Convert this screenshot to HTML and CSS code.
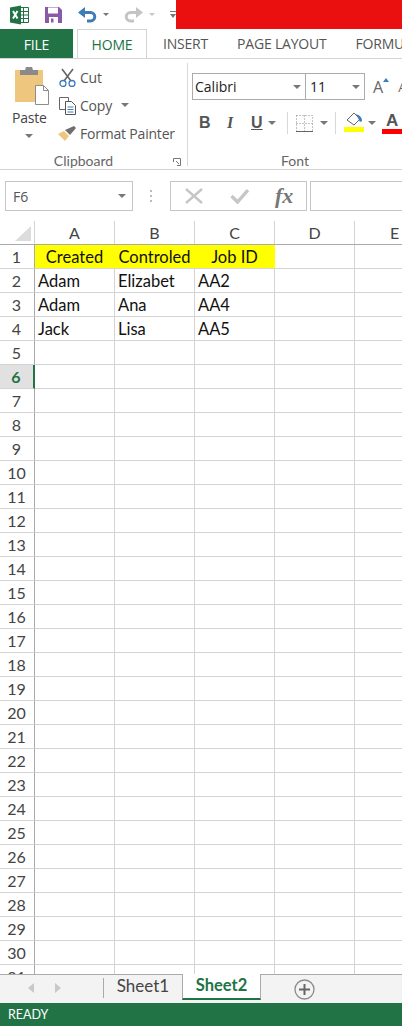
FILE: index.html
```html
<!DOCTYPE html>
<html lang="en">
<head>
<meta charset="utf-8">
<title>Excel</title>
<link rel="stylesheet" href="styles.css">
</head>
<body>
<div class="app">
  <div class="titlebar">
    <svg class="qa-logo" width="22" height="22" viewBox="0 0 22 22"><path fill="#fff" stroke="#217346" d="M9.500 3.500h10v15h-10z"/><path stroke="#217346" fill="none" d="M14.500 3.500v15M9.500 7.500h10M9.500 11h10M9.500 14.500h10"/><path fill="#217346" d="M1 3.500 12 1.500v19L1 18.500z"/><path stroke="#fff" stroke-width="2" fill="none" d="M4 7l4.500 7.500M8.500 7 4 14.500"/></svg>
    <svg class="qa-save" width="17" height="17" viewBox="0 0 17 17"><path fill="#8a5aa8" d="M0 1h14l3 3v13H0z"/><path fill="#fff" d="M3 1.500h10v6H3z"/><path fill="#fff" d="M4 11h9v6H4z"/><path fill="#8a5aa8" d="M6 12.500h2.500v4H6z"/></svg>
    <svg class="qa-undo" width="19" height="17" viewBox="0 0 19 17"><path fill="none" stroke="#3e7cb8" stroke-width="3" d="M4 6.500h8.500a4 4 0 0 1 0 8.500H9"/><path fill="#3e7cb8" d="M0 6.500 7 1v11z"/></svg>
    <span class="caret caret-dark qa-caret qa-c1"></span>
    <svg class="qa-redo" width="19" height="17" viewBox="0 0 19 17"><path fill="none" stroke="#c4c4c4" stroke-width="3" d="M15 6.500H6.500a4 4 0 0 0 0 8.500H10"/><path fill="#c4c4c4" d="M19 6.500 12 1v11z"/></svg>
    <span class="caret caret-light qa-caret qa-c2"></span>
    <svg class="qa-more" width="6" height="8" viewBox="0 0 6 8"><path fill="#777" d="M0 0h6v1H0zM0 3h6L3 7z"/></svg>
    <div class="redbar"></div>
  </div>

  <div class="tabs">
    <div class="tab-file">FILE</div>
    <div class="tab-home">HOME</div>
    <div class="tab">INSERT</div>
    <div class="tab tab-wide">PAGE LAYOUT</div>
    <div class="tab tab-last">FORMULAS</div>
  </div>

  <div class="ribbon">
    <section class="group group-clip">
      <div class="group-body">
        <div class="paste">
          <svg width="35" height="39" viewBox="0 0 35 39"><path fill="#eec67d" d="M0 3h28v32H0z"/><path fill="#8a8a8a" d="M5 3h5l1-3h6l1 3h5v5H5z"/><path fill="#fff" stroke="#8c8c8c" d="M20.500 18.500h8l5 5v14h-13z"/><path fill="none" stroke="#8c8c8c" d="M28.500 18.500v5h5"/></svg>
          <span class="paste-label">Paste</span>
          <span class="caret caret-dark"></span>
        </div>
        <div class="clip-list">
          <div class="clip-row">
            <svg width="17" height="19" viewBox="0 0 17 19"><path stroke="#666" stroke-width="1.600" fill="none" d="M3 1l9 12M14 1 5 13"/><circle cx="4" cy="15.500" r="3" fill="none" stroke="#3e7cb8" stroke-width="1.300"/><circle cx="13" cy="15.500" r="3" fill="none" stroke="#3e7cb8" stroke-width="1.300"/></svg>
            <span>Cut</span>
          </div>
          <div class="clip-row">
            <svg width="17" height="19" viewBox="0 0 17 19"><path fill="#fff" stroke="#666" d="M.5 1.500h9v12h-9z"/><path fill="#fff" stroke="#555" d="M6.500 5.500h6l4 4v9h-10z"/><path stroke="#3e7cb8" d="M8.500 11h6M8.500 13.500h6M8.500 16h6"/></svg>
            <span>Copy</span>
            <span class="caret caret-dark copy-caret"></span>
          </div>
          <div class="clip-row">
            <svg width="19" height="15" viewBox="0 0 19 15"><path fill="#eec67d" d="M0 8l6-3 5 5-4 5z"/><path fill="#6e6e6e" d="M7 4l5 5 6-7-2-2z"/></svg>
            <span>Format Painter</span>
          </div>
        </div>
      </div>
      <div class="group-label group-label-clip">
        <span>Clipboard</span>
        <svg class="launcher" width="8" height="8" viewBox="0 0 8 8"><path fill="none" stroke="#777" d="M.5 4V.5H7.500V7.500H4"/><path stroke="#777" d="M3 3l3 3"/></svg>
      </div>
    </section>

    <section class="group group-font">
      <div class="group-body group-body-font">
        <div class="font-row">
          <div class="combo combo-name"><span>Calibri</span><span class="caret caret-dark"></span></div>
          <div class="combo combo-size"><span>11</span><span class="caret caret-dark"></span></div>
          <div class="grow-a">A<svg width="6" height="4" viewBox="0 0 6 4"><path fill="#3e7cb8" d="M0 4l3-4 3 4z"/></svg></div>
          <div class="shrink-a">A</div>
        </div>
        <div class="format-row">
          <span class="fmt fmt-b">B</span>
          <span class="fmt fmt-i">I</span>
          <span class="fmt fmt-u">U</span>
          <span class="caret caret-dark u-caret"></span>
          <span class="sep"></span>
          <svg class="borders" width="17" height="17" viewBox="0 0 17 17"><path fill="none" stroke="#888" stroke-dasharray="1 2" d="M.5.500h16v16H.500zM8.500.500v16M.500 8.500h16"/><path stroke="#666" d="M0 16.500h17"/></svg>
          <span class="caret caret-dark border-caret"></span>
          <span class="sep"></span>
          <div class="fill-icon">
            <svg width="20" height="15" viewBox="0 0 20 15"><path fill="#fff" stroke="#666" d="M3 8l7-7 6 6-6 6z"/><path fill="#3e7cb8" d="M12 2c3 1 6 3 6 7l-2 1z"/></svg>
            <span class="swatch swatch-yellow"></span>
          </div>
          <span class="caret caret-dark"></span>
          <div class="color-a"><span>A</span><span class="swatch swatch-red"></span></div>
        </div>
      </div>
      <div class="group-label">Font</div>
    </section>
  </div>

  <div class="formula">
    <div class="namebox"><span>F6</span><span class="caret caret-dark"></span></div>
    <div class="dots"><i></i><i></i><i></i></div>
    <div class="fx-box">
      <svg class="fx-x" width="18" height="16" viewBox="0 0 18 16"><path stroke="#c6c6c6" stroke-width="2.400" d="M1 1l16 14M17 1 1 15"/></svg>
      <svg class="fx-check" width="19" height="16" viewBox="0 0 19 16"><path fill="none" stroke="#c6c6c6" stroke-width="3.400" d="M1.500 8l6 6L18 2"/></svg>
      <span class="fx">fx</span>
    </div>
    <div class="formula-input"></div>
  </div>

  <div class="sheet">
    <div class="row row-head">
      <div class="corner"><span></span></div>
      <div class="col">A</div><div class="col">B</div><div class="col">C</div><div class="col">D</div><div class="col">E</div>
    </div>
    <div class="row"><div class="num">1</div><div class="cell hl ctr">Created</div><div class="cell hl ctr">Controled</div><div class="cell hl ctr">Job ID</div><div class="cell"></div><div class="cell"></div></div>
    <div class="row"><div class="num">2</div><div class="cell">Adam</div><div class="cell">Elizabet</div><div class="cell">AA2</div><div class="cell"></div><div class="cell"></div></div>
    <div class="row"><div class="num">3</div><div class="cell">Adam</div><div class="cell">Ana</div><div class="cell">AA4</div><div class="cell"></div><div class="cell"></div></div>
    <div class="row"><div class="num">4</div><div class="cell">Jack</div><div class="cell">Lisa</div><div class="cell">AA5</div><div class="cell"></div><div class="cell"></div></div>
    <div class="row"><div class="num">5</div><div class="cell"></div><div class="cell"></div><div class="cell"></div><div class="cell"></div><div class="cell"></div></div>
    <div class="row"><div class="num num-active">6</div><div class="cell"></div><div class="cell"></div><div class="cell"></div><div class="cell"></div><div class="cell"></div></div>
    <div class="row"><div class="num">7</div><div class="cell"></div><div class="cell"></div><div class="cell"></div><div class="cell"></div><div class="cell"></div></div>
    <div class="row"><div class="num">8</div><div class="cell"></div><div class="cell"></div><div class="cell"></div><div class="cell"></div><div class="cell"></div></div>
    <div class="row"><div class="num">9</div><div class="cell"></div><div class="cell"></div><div class="cell"></div><div class="cell"></div><div class="cell"></div></div>
    <div class="row"><div class="num">10</div><div class="cell"></div><div class="cell"></div><div class="cell"></div><div class="cell"></div><div class="cell"></div></div>
    <div class="row"><div class="num">11</div><div class="cell"></div><div class="cell"></div><div class="cell"></div><div class="cell"></div><div class="cell"></div></div>
    <div class="row"><div class="num">12</div><div class="cell"></div><div class="cell"></div><div class="cell"></div><div class="cell"></div><div class="cell"></div></div>
    <div class="row"><div class="num">13</div><div class="cell"></div><div class="cell"></div><div class="cell"></div><div class="cell"></div><div class="cell"></div></div>
    <div class="row"><div class="num">14</div><div class="cell"></div><div class="cell"></div><div class="cell"></div><div class="cell"></div><div class="cell"></div></div>
    <div class="row"><div class="num">15</div><div class="cell"></div><div class="cell"></div><div class="cell"></div><div class="cell"></div><div class="cell"></div></div>
    <div class="row"><div class="num">16</div><div class="cell"></div><div class="cell"></div><div class="cell"></div><div class="cell"></div><div class="cell"></div></div>
    <div class="row"><div class="num">17</div><div class="cell"></div><div class="cell"></div><div class="cell"></div><div class="cell"></div><div class="cell"></div></div>
    <div class="row"><div class="num">18</div><div class="cell"></div><div class="cell"></div><div class="cell"></div><div class="cell"></div><div class="cell"></div></div>
    <div class="row"><div class="num">19</div><div class="cell"></div><div class="cell"></div><div class="cell"></div><div class="cell"></div><div class="cell"></div></div>
    <div class="row"><div class="num">20</div><div class="cell"></div><div class="cell"></div><div class="cell"></div><div class="cell"></div><div class="cell"></div></div>
    <div class="row"><div class="num">21</div><div class="cell"></div><div class="cell"></div><div class="cell"></div><div class="cell"></div><div class="cell"></div></div>
    <div class="row"><div class="num">22</div><div class="cell"></div><div class="cell"></div><div class="cell"></div><div class="cell"></div><div class="cell"></div></div>
    <div class="row"><div class="num">23</div><div class="cell"></div><div class="cell"></div><div class="cell"></div><div class="cell"></div><div class="cell"></div></div>
    <div class="row"><div class="num">24</div><div class="cell"></div><div class="cell"></div><div class="cell"></div><div class="cell"></div><div class="cell"></div></div>
    <div class="row"><div class="num">25</div><div class="cell"></div><div class="cell"></div><div class="cell"></div><div class="cell"></div><div class="cell"></div></div>
    <div class="row"><div class="num">26</div><div class="cell"></div><div class="cell"></div><div class="cell"></div><div class="cell"></div><div class="cell"></div></div>
    <div class="row"><div class="num">27</div><div class="cell"></div><div class="cell"></div><div class="cell"></div><div class="cell"></div><div class="cell"></div></div>
    <div class="row"><div class="num">28</div><div class="cell"></div><div class="cell"></div><div class="cell"></div><div class="cell"></div><div class="cell"></div></div>
    <div class="row"><div class="num">29</div><div class="cell"></div><div class="cell"></div><div class="cell"></div><div class="cell"></div><div class="cell"></div></div>
    <div class="row"><div class="num">30</div><div class="cell"></div><div class="cell"></div><div class="cell"></div><div class="cell"></div><div class="cell"></div></div>
    <div class="row"><div class="num">31</div><div class="cell"></div><div class="cell"></div><div class="cell"></div><div class="cell"></div><div class="cell"></div></div>
  </div>

  <div class="sheet-tabs">
    <div class="nav">
      <svg width="6" height="10" viewBox="0 0 6 10"><path fill="#c8c8c8" d="M6 0v10L0 5z"/></svg>
      <svg width="6" height="10" viewBox="0 0 6 10"><path fill="#c8c8c8" d="M0 0v10l6-5z"/></svg>
    </div>
    <div class="sheet-tab">Sheet1</div>
    <div class="sheet-tab-active">Sheet2</div>
    <svg class="add" width="21" height="21" viewBox="0 0 21 21"><circle cx="10.500" cy="10.500" r="9.500" fill="none" stroke="#8c8c8c" stroke-width="1.300"/><path stroke="#666" stroke-width="2" d="M10.500 5v11M5 10.500h11"/></svg>
  </div>

  <div class="status">READY</div>
</div>
</body>
</html>
```

FILE: styles.css
```css
* { box-sizing: border-box; }
html, body { margin: 0; padding: 0; }
body { background: #fff; font-family: "Open Sans", "Liberation Sans", sans-serif; color: #444; overflow: hidden; }
.app { width: 402px; height: 1026px; display: flex; flex-direction: column; overflow: hidden; }

.caret { display: inline-block; width: 0; height: 0; border-left: 4px solid transparent; border-right: 4px solid transparent; flex: none; }
.caret-dark { border-top: 4px solid #777; }
.caret-light { border-top: 4px solid #c8c8c8; }
.qa-caret { border-left-width: 3px; border-right-width: 3px; border-top-width: 3px; }

.titlebar { height: 29px; display: flex; align-items: center; flex: none; }
.qa-logo { margin-left: 9px; flex: none; }
.qa-save { margin-left: 14px; flex: none; }
.qa-undo { margin-left: 16px; flex: none; }
.qa-c1 { margin-left: 6px; }
.qa-redo { margin-left: 15px; flex: none; }
.qa-c2 { margin-left: 6px; }
.qa-more { margin-left: 15px; flex: none; }
.redbar { height: 29px; background: #ea1010; width: 226px; margin-left: auto; flex: none; }

.tabs { height: 30px; display: flex; flex: none; border-bottom: 1px solid #d4d4d4; font-size: 14px; white-space: nowrap; overflow: hidden; letter-spacing: -.2px; }
.tab-file { flex: none; width: 73px; height: 30px; background: #217346; color: #fff; display: flex; align-items: center; justify-content: center; }
.tab-home { flex: none; width: 70px; margin-left: 4px; height: 30px; border: 1px solid #d4d4d4; border-bottom: 1px solid #fff; color: #217346; display: flex; align-items: center; justify-content: center; background: #fff; }
.tab { flex: none; color: #555; display: flex; align-items: center; margin-left: 16px; }
.tab-wide { margin-left: 29px; }
.tab-last { margin-left: 29px; }

.ribbon { height: 111px; display: flex; flex: none; border-bottom: 1px solid #d4d4d4; padding-top: 4px; }
.group { display: flex; flex-direction: column; height: 103px; }
.group-clip { width: 188px; flex: none; border-right: 1px solid #d8d8d8; }
.group-font { flex: 1; min-width: 0; }
.group-body { flex: 1; display: flex; min-height: 0; }
.group-label { height: 18px; margin-bottom: -3px; flex: none; font-size: 14px; color: #666; display: flex; align-items: center; justify-content: center; position: relative; font-family: Lato, sans-serif; }
.group-label-clip { padding-right: 20px; }
.launcher { position: absolute; right: 6px; top: 7px; }

.paste { width: 58px; flex: none; padding-left: 15px; display: flex; flex-direction: column; align-items: flex-start; padding-top: 4px; }
.paste svg { flex: none; }
.paste-label { font-size: 14px; margin-left: -3px; margin-top: 3px; line-height: 18px; letter-spacing: -.2px; }
.paste .caret { margin: 7px 0 0 10px; }
.clip-list { display: flex; flex-direction: column; flex: none; }
.clip-row { height: 28px; flex: none; display: flex; align-items: center; gap: 3px; font-size: 14px; white-space: nowrap; letter-spacing: -.2px; color: #555; }
.clip-row svg { flex: none; width: 19px; }
.copy-caret { margin-left: 6px; }

.group-body-font { flex-direction: column; padding-left: 4px; overflow: hidden; }
.font-row { display: flex; align-items: center; height: 27px; margin-top: 10px; flex: none; }
.combo { height: 27px; flex: none; border: 1px solid #ababab; display: flex; align-items: center; justify-content: space-between; font-size: 14px; color: #222; padding: 0 4px 0 2px; }
.combo-name { width: 114px; }
.combo-size { width: 59px; border-left: 0; padding-left: 4px; }
.grow-a { margin-left: 8px; flex: none; font-size: 16px; color: #666; display: flex; align-items: flex-start; }
.grow-a svg { margin-top: 2px; }
.shrink-a { margin-left: 9px; flex: none; font-size: 13px; color: #666; }
.format-row { display: flex; align-items: center; height: 24px; margin-top: 11px; flex: none; white-space: nowrap; padding-left: 7px; }
.fmt { font-family: "Liberation Sans", sans-serif; font-size: 16px; color: #555; font-weight: 700; flex: none; }
.fmt-b { width: 28px; }
.fmt-i { width: 24px; font-family: "Liberation Serif", serif; font-style: italic; }
.fmt-u { width: 17px; text-decoration: underline; }
.u-caret { margin-right: 4px; }
.sep { width: 1px; height: 22px; background: #d8d8d8; margin: 0 8px 0 7px; flex: none; }
.borders { flex: none; }
.border-caret { margin-left: 7px; }
.fill-icon { display: flex; flex-direction: column; width: 20px; flex: none; margin-top: -3px; margin-right: 4px; }
.swatch { display: block; height: 5px; width: 20px; }
.swatch-yellow { background: #ffff00; }
.swatch-red { background: #ff0000; }
.color-a { display: flex; flex-direction: column; width: 20px; margin-left: 6px; flex: none; font-size: 17px; font-weight: 700; line-height: 16px; color: #555; font-family: "Liberation Sans", sans-serif; }
.color-a span:first-child { margin-left: 4px; }

.formula { height: 30px; margin-top: 11px; display: flex; align-items: stretch; flex: none; padding-left: 5px; }
.namebox { width: 128px; flex: none; border: 1px solid #c6c6c6; display: flex; align-items: center; justify-content: space-between; padding: 0 6px 0 7px; font-size: 14px; color: #555; }
.dots { width: 37px; flex: none; display: flex; flex-direction: column; justify-content: center; align-items: center; gap: 3px; padding-right: 2px; }
.dots i { width: 2px; height: 2px; background: #bbb; display: block; }
.fx-box { width: 137px; flex: none; border: 1px solid #c6c6c6; display: flex; align-items: center; padding-left: 14px; }
.fx-check { margin-left: 27px; flex: none; }
.fx-x { flex: none; }
.fx { font-family: "Liberation Serif", serif; font-style: italic; font-weight: 700; font-size: 22px; line-height: 24px; color: #777; margin-left: 26px; }
.formula-input { flex: 1; margin-left: 3px; border: 1px solid #c6c6c6; border-right: 0; }

.sheet { flex: 1; margin-top: 10px; min-height: 0; overflow: hidden; font-family: Lato, sans-serif; }
.row { display: grid; grid-template-columns: 35px 80px 80px 80px 80px 80px; height: 24px; width: 435px; }
.row-head { height: 24px; border-bottom: 1px solid #aaa; }
.corner { border-right: 1px solid #d4d4d4; display: flex; justify-content: flex-end; align-items: flex-end; padding: 0 3px 3px 0; }
.corner span { width: 0; height: 0; border-left: 16px solid transparent; border-bottom: 15px solid #dcdcdc; }
.col { text-align: center; font-size: 16px; line-height: 23px; color: #444; border-right: 1px solid #d4d4d4; }
.num { text-align: center; font-size: 16px; line-height: 23px; color: #444; border-right: 1px solid #aaa; border-bottom: 1px solid #d4d4d4; padding-right: 1px; }
.num-active { background: #e1e1e1; color: #217346; font-weight: 700; border-right: 2px solid #217346; }
.cell { font-size: 16.500px; line-height: 24px; color: #111; border-right: 1px solid #d4d4d4; border-bottom: 1px solid #d4d4d4; padding-left: 3px; white-space: nowrap; overflow: hidden; }
.hl { background: #ffff00; border-right-color: #ffff00; }
.ctr { text-align: center; padding-left: 0; }

.sheet-tabs { height: 29px; flex: none; background: #f3f3f3; border-top: 1px solid #aaa; display: flex; align-items: flex-start; }
.nav { width: 104px; height: 20px; flex: none; display: flex; align-items: center; padding-left: 28px; gap: 21px; border-right: 1px solid #aaa; margin-top: 3px; }
.sheet-tab { width: 78px; flex: none; height: 26px; font-size: 17px; line-height: 22px; text-align: center; color: #444; font-family: Lato, sans-serif; }
.sheet-tab-active { width: 79px; flex: none; height: 26px; margin-top: -1px; font-size: 16.500px; font-weight: 700; line-height: 22px; text-align: center; color: #217346; background: #fff; border: 1px solid #aaa; border-top: 0; border-bottom: 2px solid #217346; font-family: Lato, sans-serif; }
.add { margin: 4px 0 0 33px; flex: none; }

.status { height: 23px; flex: none; background: #217346; color: #fff; font-size: 12.500px; display: flex; align-items: center; padding-left: 8px; font-family: Lato, sans-serif; }
```
